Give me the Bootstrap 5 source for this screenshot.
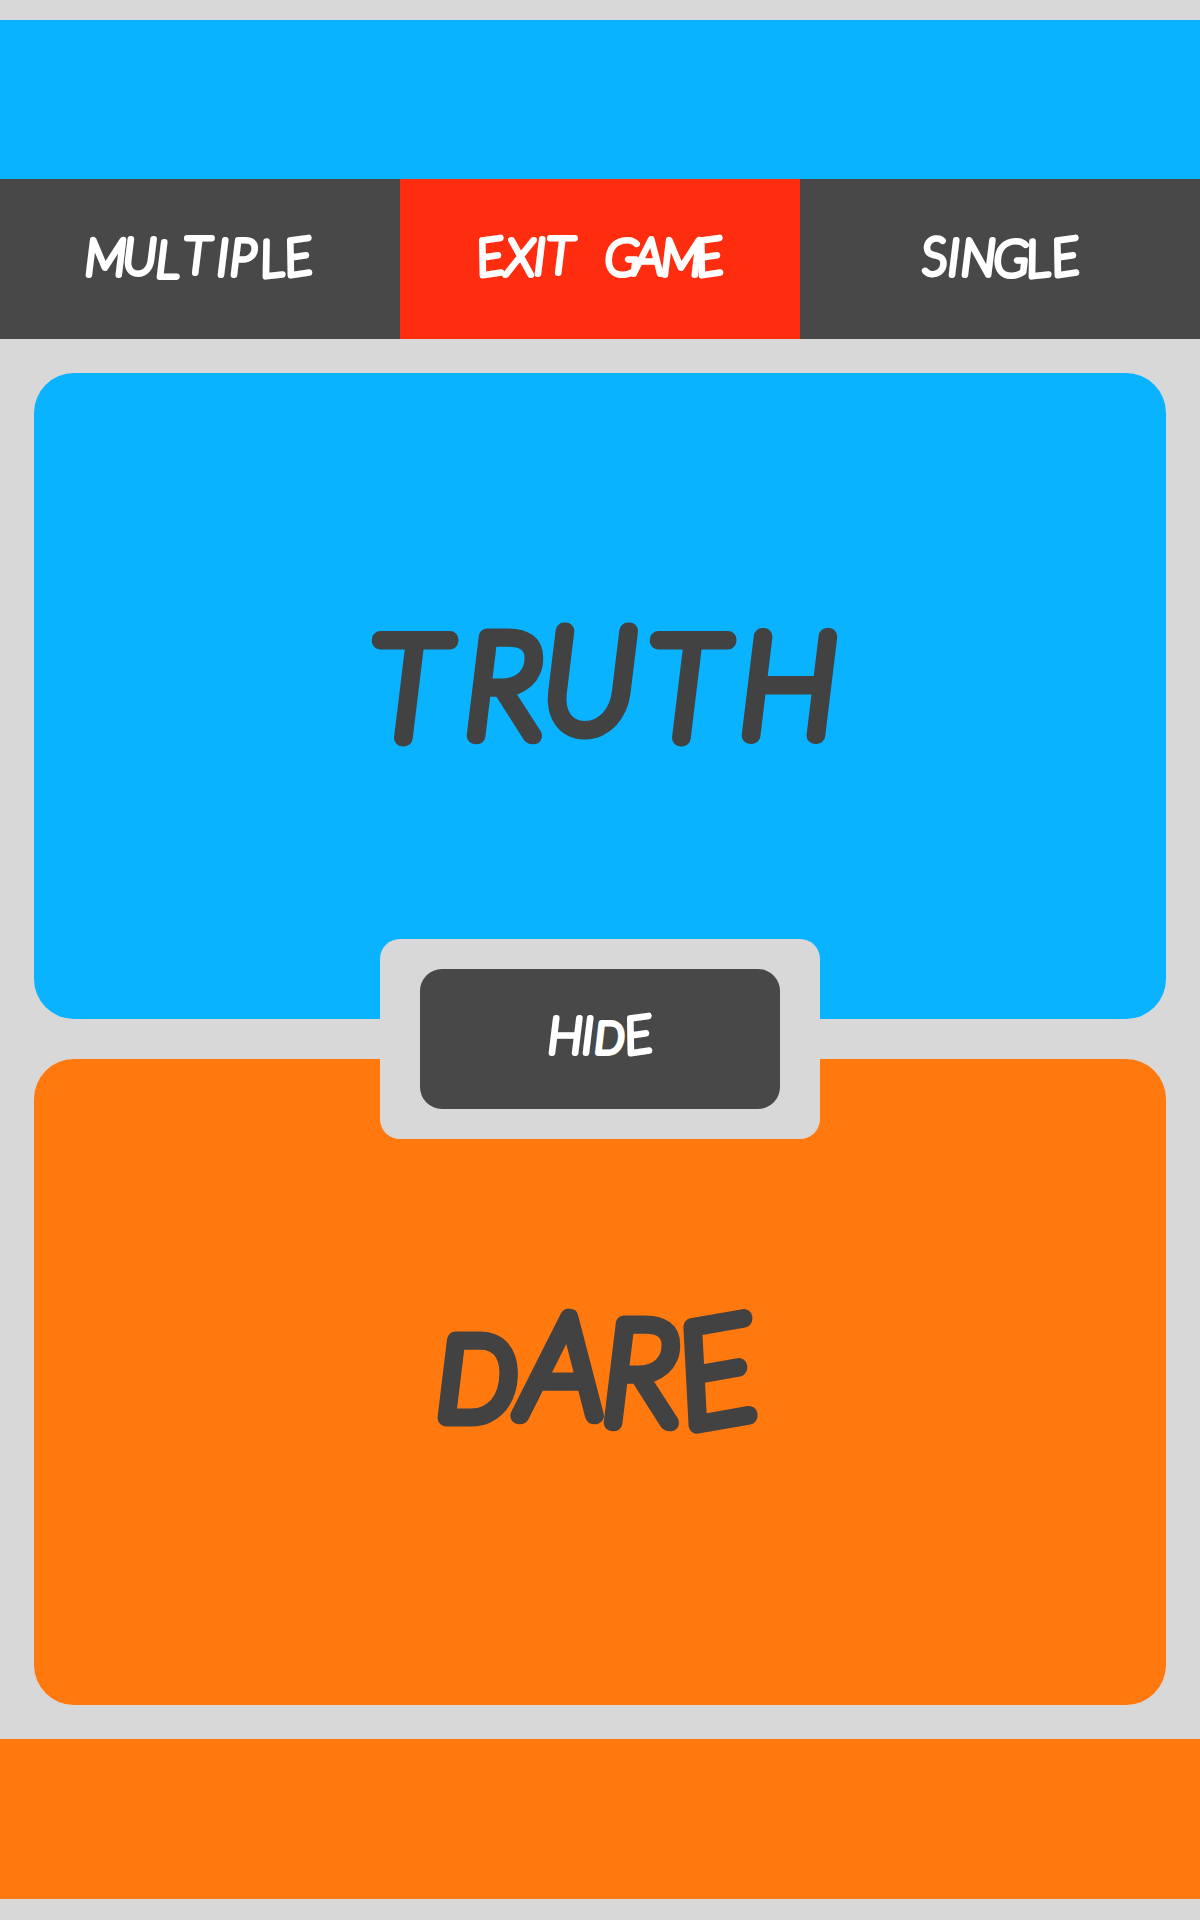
<!DOCTYPE html>
<html lang="en"><head><meta charset="utf-8"><title>Truth or Dare</title>
<link href="https://cdn.jsdelivr.net/npm/bootstrap@5.3.0/dist/css/bootstrap.min.css" rel="stylesheet">
<style>
html,body{height:1920px;margin:0}
body{background:#d8d8d8;padding:20px 0 0;overflow:hidden}
.band{height:160px}
.band-top{height:159px}
.blue-fill{background:#0ab3ff}
.orange-fill{background:#ff790f}
.dark-fill{background:#484848}
.red-fill{background:#ff2d0f}
.nav-cell{height:160px}
.stage{padding:34px;gap:40px;position:relative}
.panel{height:646px;border-radius:40px}
.hide-wrap{position:absolute;left:380px;top:600px;width:440px;height:200px;background:#d8d8d8;border-radius:20px;padding:30px 40px}
.hide-btn{height:140px;border-radius:22px}
.word{font-family:"Lato",sans-serif;font-style:italic;font-weight:100;stroke-linejoin:round;stroke-linecap:round;paint-order:stroke}
.word-sm{font-size:50px;fill:#fff;stroke:#fff;stroke-width:6px}
.word-lg{font-size:140px;fill:#424242;stroke:#424242;stroke-width:17px}
.narrow-sm{font-size:41px}
.narrow-lg{font-size:110px}
</style></head>
<body>
<div class="band-top blue-fill"></div>
<div class="row g-0">
<div class="col-4 nav-cell dark-fill"><svg class="d-block w-100 h-100" viewBox="0 0 400 160"><text class="word word-sm" x="85 123 156 184 217 230 262 287" y="96 95 98 94 96 96 98 97" rotate="0 0 0 0 0 0 -6 -8">MULTIPLE</text></svg></div>
<div class="col-4 nav-cell red-fill"><svg class="d-block w-100 h-100" viewBox="0 0 400 160"><text class="word word-sm" x="79 106 134 147 190 205 234 261 298" y="97 96 95 94 96 96 95 96 97" rotate="-8 0 0 0 0 0 0 0 -8">EXIT GAME</text></svg></div>
<div class="col-4 nav-cell dark-fill"><svg class="d-block w-100 h-100" viewBox="0 0 400 160"><text class="word word-sm" x="124 148 161 194 228 254" y="96 96 96 97 98 97" rotate="-6 0 0 0 -6 -8">SINGLE</text></svg></div>
</div>
<div class="stage d-flex flex-column">
<div class="panel blue-fill"><svg class="d-block w-100 h-100" viewBox="0 0 1132 646"><text class="word word-lg" x="338 431 509 616 706" y="365 363 357 365 362">TRUTH</text></svg></div>
<div class="panel orange-fill"><svg class="d-block w-100 h-100" viewBox="0 0 1132 646"><text class="word word-lg" x="404 487 568 653" y="359 357 364 368" rotate="0 0 0 -10"><tspan class="narrow-lg">D</tspan>ARE</text></svg></div>
<div class="hide-wrap"><div class="hide-btn dark-fill"><svg class="d-block w-100 h-100" viewBox="0 0 360 140"><text class="word word-sm" x="128 162 175 207" y="84 84 84 85" rotate="0 0 0 -8">HI<tspan class="narrow-sm">D</tspan>E</text></svg></div></div>
</div>
<div class="band orange-fill"></div>
<script src="https://cdn.jsdelivr.net/npm/bootstrap@5.3.0/dist/js/bootstrap.bundle.min.js"></script>
</body></html>
